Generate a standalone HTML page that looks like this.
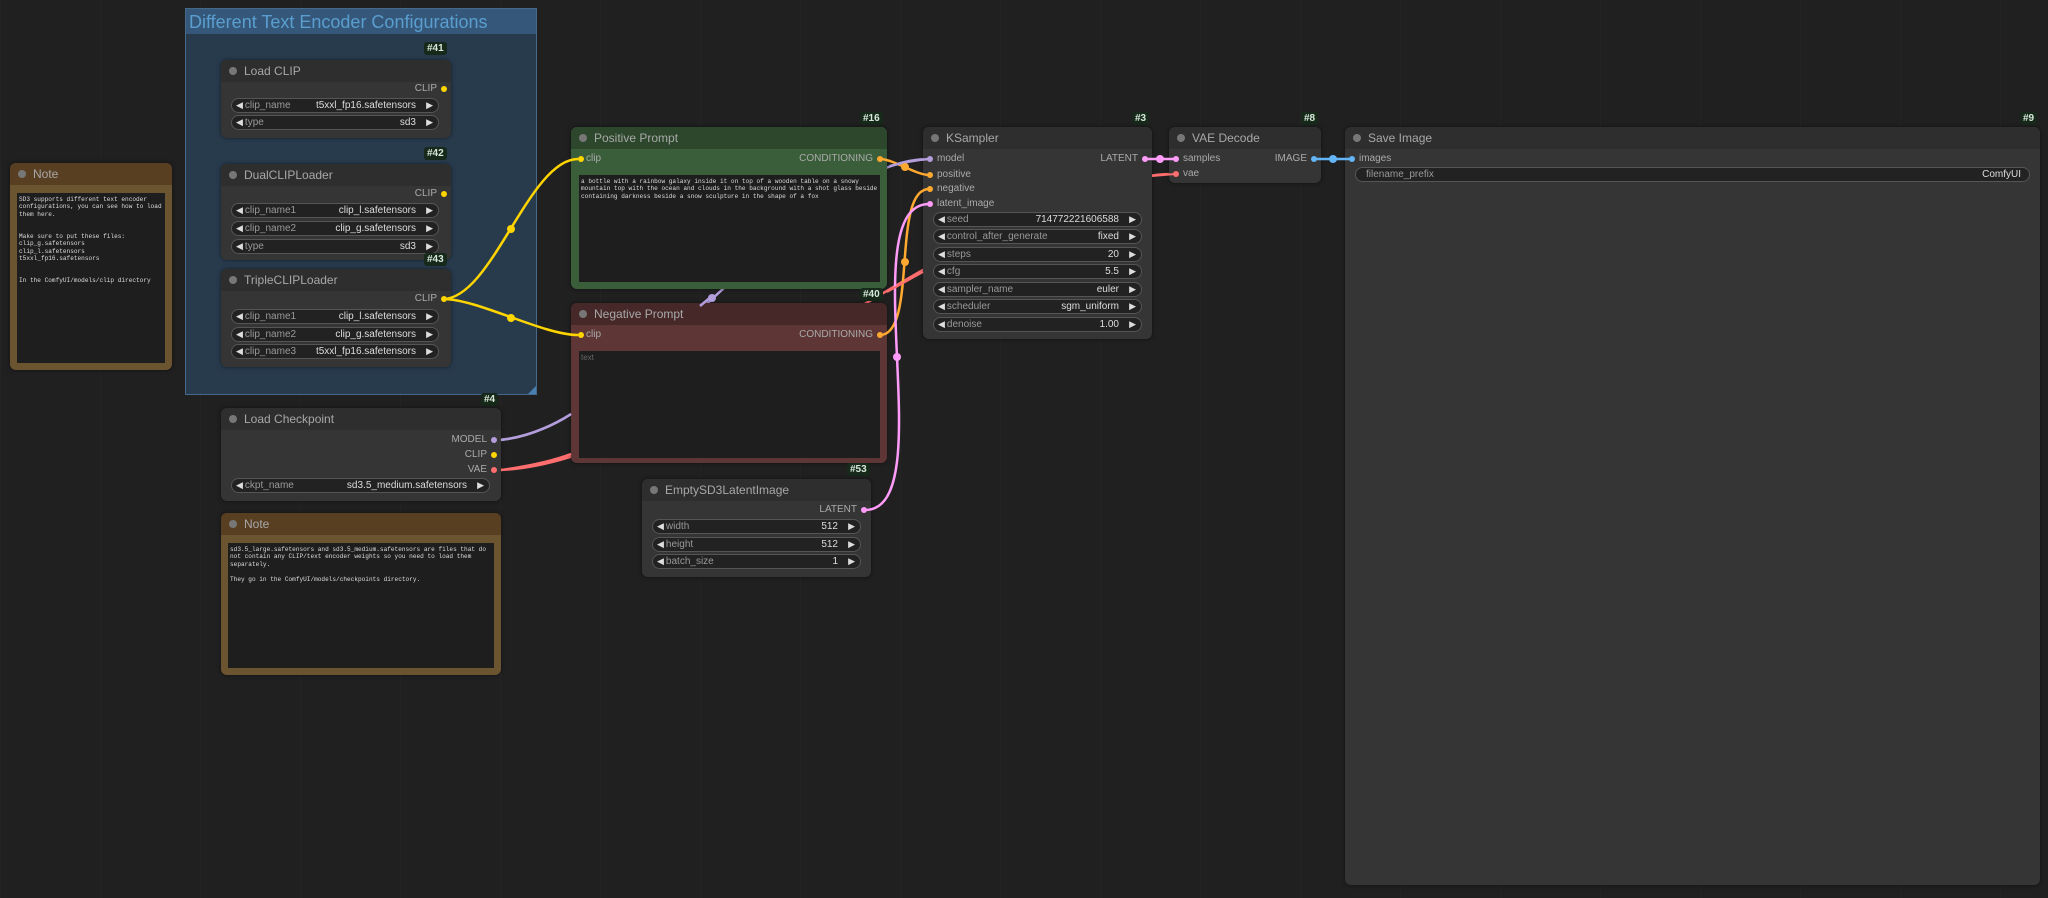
<!DOCTYPE html>
<html><head><meta charset="utf-8"><style>
*{box-sizing:border-box;margin:0;padding:0}
body{width:2048px;height:898px;overflow:hidden;background:#202020;font-family:"Liberation Sans",Arial,sans-serif;position:relative;
background-image:linear-gradient(90deg,rgba(255,255,255,0.018) 1px,transparent 1px);background-size:100px 100px}
.abs{position:absolute}
.group{position:absolute;left:185px;top:8px;width:352px;height:387px;background:#283b4d;border:1px solid #44698a}
.group .gt{height:25px;background:#35587a;color:#5a9ed0;font-size:18px;padding:3px 0 0 3px;white-space:nowrap}
.node{position:absolute;background:#353535;border-radius:6px;box-shadow:0 0 4px rgba(0,0,0,.5)}
.tb{position:absolute;left:0;top:0;right:0;height:22px;background:#2e2e2e;border-radius:6px 6px 0 0;color:#a8a8a8;font-size:12px;line-height:22px;padding-left:23px;white-space:nowrap}
.tb:before{content:"";position:absolute;left:8px;top:7px;width:8px;height:8px;border-radius:50%;background:#777}
.sl{position:absolute;font-size:10px;color:#aaa;line-height:12px;white-space:nowrap}
.out{right:14px;text-align:right}
.in{left:15px}
.dot{position:absolute;width:6px;height:6px;border-radius:50%}
.w{position:absolute;height:15px;border-radius:8px;background:#222;border:1px solid #555;font-size:10px;line-height:13px;color:#999;white-space:nowrap}
.w .l{position:absolute;left:4px;top:0}
.w .l:before{content:"◀";color:#ddd;font-size:9px;margin-right:2px}
.w .v{position:absolute;right:22px;top:0;color:#ddd}
.w .r{position:absolute;right:5px;top:0;color:#ddd;font-size:9px}
.badge{position:absolute;height:13px;background:#17291a;color:#d8e8d8;font-size:10px;font-weight:bold;line-height:13px;padding:0 3px;border-radius:3px}
.ta{position:absolute;background:#1e1e1e;font-family:"Liberation Mono",monospace;font-size:6.1px;line-height:7.4px;color:#ddd;padding:3px 2px;white-space:pre;overflow:hidden}
.Y{background:#ffd500}.O{background:#ffa931}.P{background:#b39ddb}.R{background:#ff6e6e}.K{background:#ff9cf9}.B{background:#64b5f6}
</style></head><body>

<div class="group"><div class="gt">Different Text Encoder Configurations</div>
<div class="abs" style="right:0;bottom:0;width:0;height:0;border-left:8px solid transparent;border-bottom:8px solid #4a80b0"></div></div>

<svg class="abs" style="left:0;top:0" width="2048" height="898">
<g fill="none" stroke-width="2.5">
<path d="M494,440 C624,440 799,159 929,159" stroke="#b39ddb"/>
<path d="M494,470 C680,470 989,174 1175,174" stroke="#ff6e6e"/>
</g>
</svg>

<div class="node" style="left:10px;top:163px;width:162px;height:207px;background:#6b5530">
<div class="tb" style="background:#593f22">Note</div>
<div class="ta" style="left:7px;top:30px;width:148px;height:170px">SD3 supports different text encoder
configurations, you can see how to load
them here.
 
 
Make sure to put these files:
clip_g.safetensors
clip_l.safetensors
t5xxl_fp16.safetensors
 
 
In the ComfyUI/models/clip directory</div></div>

<div class="badge" style="left:424px;top:42px">#41</div>
<div class="node" style="left:221px;top:60px;width:230px;height:78px">
<div class="tb">Load CLIP</div>
<div class="sl out" style="top:23px">CLIP</div><div class="dot Y" style="right:4px;top:26px"></div>
<div class="w" style="left:10px;top:38px;width:208px"><span class="l">clip_name</span><span class="v">t5xxl_fp16.safetensors</span><span class="r">▶</span></div>
<div class="w" style="left:10px;top:55px;width:208px"><span class="l">type</span><span class="v">sd3</span><span class="r">▶</span></div>
</div>

<div class="badge" style="left:424px;top:147px">#42</div>
<div class="node" style="left:221px;top:164px;width:230px;height:96px">
<div class="tb">DualCLIPLoader</div>
<div class="sl out" style="top:24px">CLIP</div><div class="dot Y" style="right:4px;top:27px"></div>
<div class="w" style="left:10px;top:39px;width:208px"><span class="l">clip_name1</span><span class="v">clip_l.safetensors</span><span class="r">▶</span></div>
<div class="w" style="left:10px;top:57px;width:208px"><span class="l">clip_name2</span><span class="v">clip_g.safetensors</span><span class="r">▶</span></div>
<div class="w" style="left:10px;top:75px;width:208px"><span class="l">type</span><span class="v">sd3</span><span class="r">▶</span></div>
</div>

<div class="badge" style="left:424px;top:253px">#43</div>
<div class="node" style="left:221px;top:269px;width:230px;height:98px">
<div class="tb">TripleCLIPLoader</div>
<div class="sl out" style="top:24px">CLIP</div><div class="dot Y" style="right:4px;top:27px"></div>
<div class="w" style="left:10px;top:40px;width:208px"><span class="l">clip_name1</span><span class="v">clip_l.safetensors</span><span class="r">▶</span></div>
<div class="w" style="left:10px;top:58px;width:208px"><span class="l">clip_name2</span><span class="v">clip_g.safetensors</span><span class="r">▶</span></div>
<div class="w" style="left:10px;top:75px;width:208px"><span class="l">clip_name3</span><span class="v">t5xxl_fp16.safetensors</span><span class="r">▶</span></div>
</div>

<div class="badge" style="left:481px;top:393px">#4</div>
<div class="node" style="left:221px;top:408px;width:280px;height:93px">
<div class="tb">Load Checkpoint</div>
<div class="sl out" style="top:26px">MODEL</div><div class="dot P" style="right:4px;top:29px"></div>
<div class="sl out" style="top:41px">CLIP</div><div class="dot Y" style="right:4px;top:44px"></div>
<div class="sl out" style="top:56px">VAE</div><div class="dot R" style="right:4px;top:59px"></div>
<div class="w" style="left:10px;top:70px;width:259px"><span class="l">ckpt_name</span><span class="v">sd3.5_medium.safetensors</span><span class="r">▶</span></div>
</div>

<div class="node" style="left:221px;top:513px;width:280px;height:162px;background:#6b5530">
<div class="tb" style="background:#593f22">Note</div>
<div class="ta" style="left:7px;top:30px;width:266px;height:125px">sd3.5_large.safetensors and sd3.5_medium.safetensors are files that do
not contain any CLIP/text encoder weights so you need to load them
separately.
 
They go in the ComfyUI/models/checkpoints directory.</div></div>

<div class="badge" style="left:860px;top:112px">#16</div>
<div class="node" style="left:571px;top:127px;width:316px;height:162px;background:#3a5e3a">
<div class="tb" style="background:#2c472c">Positive Prompt</div>
<div class="dot Y" style="left:7px;top:29px"></div><div class="sl in" style="top:26px">clip</div>
<div class="sl out" style="top:26px">CONDITIONING</div><div class="dot O" style="right:4px;top:29px"></div>
<div class="ta" style="left:8px;top:48px;width:301px;height:107px">a bottle with a rainbow galaxy inside it on top of a wooden table on a snowy
mountain top with the ocean and clouds in the background with a shot glass beside
containing darkness beside a snow sculpture in the shape of a fox</div>
</div>

<div class="badge" style="left:860px;top:288px">#40</div>
<div class="node" style="left:571px;top:303px;width:316px;height:160px;background:#5e3636">
<div class="tb" style="background:#472828">Negative Prompt</div>
<div class="dot Y" style="left:7px;top:29px"></div><div class="sl in" style="top:26px">clip</div>
<div class="sl out" style="top:26px">CONDITIONING</div><div class="dot O" style="right:4px;top:29px"></div>
<div class="ta" style="left:8px;top:48px;width:301px;height:107px;color:#666;font-family:'Liberation Sans',sans-serif;font-size:8px">text</div>
</div>

<div class="badge" style="left:1132px;top:112px">#3</div>
<div class="node" style="left:923px;top:127px;width:229px;height:212px">
<div class="tb">KSampler</div>
<div class="dot P" style="left:4px;top:29px"></div><div class="sl" style="left:14px;top:26px">model</div>
<div class="dot O" style="left:4px;top:45px"></div><div class="sl" style="left:14px;top:42px">positive</div>
<div class="dot O" style="left:4px;top:59px"></div><div class="sl" style="left:14px;top:56px">negative</div>
<div class="dot K" style="left:4px;top:74px"></div><div class="sl" style="left:14px;top:71px">latent_image</div>
<div class="sl out" style="top:26px">LATENT</div><div class="dot K" style="right:4px;top:29px"></div>
<div class="w" style="left:10px;top:85px;width:209px"><span class="l">seed</span><span class="v">714772221606588</span><span class="r">▶</span></div>
<div class="w" style="left:10px;top:102px;width:209px"><span class="l">control_after_generate</span><span class="v">fixed</span><span class="r">▶</span></div>
<div class="w" style="left:10px;top:120px;width:209px"><span class="l">steps</span><span class="v">20</span><span class="r">▶</span></div>
<div class="w" style="left:10px;top:137px;width:209px"><span class="l">cfg</span><span class="v">5.5</span><span class="r">▶</span></div>
<div class="w" style="left:10px;top:155px;width:209px"><span class="l">sampler_name</span><span class="v">euler</span><span class="r">▶</span></div>
<div class="w" style="left:10px;top:172px;width:209px"><span class="l">scheduler</span><span class="v">sgm_uniform</span><span class="r">▶</span></div>
<div class="w" style="left:10px;top:190px;width:209px"><span class="l">denoise</span><span class="v">1.00</span><span class="r">▶</span></div>
</div>

<div class="badge" style="left:847px;top:463px">#53</div>
<div class="node" style="left:642px;top:479px;width:229px;height:98px">
<div class="tb">EmptySD3LatentImage</div>
<div class="sl out" style="top:25px">LATENT</div><div class="dot K" style="right:4px;top:28px"></div>
<div class="w" style="left:10px;top:40px;width:209px"><span class="l">width</span><span class="v">512</span><span class="r">▶</span></div>
<div class="w" style="left:10px;top:58px;width:209px"><span class="l">height</span><span class="v">512</span><span class="r">▶</span></div>
<div class="w" style="left:10px;top:75px;width:209px"><span class="l">batch_size</span><span class="v">1</span><span class="r">▶</span></div>
</div>

<div class="badge" style="left:1301px;top:112px">#8</div>
<div class="node" style="left:1169px;top:127px;width:152px;height:56px">
<div class="tb">VAE Decode</div>
<div class="dot K" style="left:4px;top:29px"></div><div class="sl" style="left:14px;top:26px">samples</div>
<div class="dot R" style="left:4px;top:44px"></div><div class="sl" style="left:14px;top:41px">vae</div>
<div class="sl out" style="top:26px">IMAGE</div><div class="dot B" style="right:4px;top:29px"></div>
</div>

<div class="badge" style="left:2020px;top:112px">#9</div>
<div class="node" style="left:1345px;top:127px;width:695px;height:758px">
<div class="tb">Save Image</div>
<div class="dot B" style="left:4px;top:29px"></div><div class="sl" style="left:14px;top:26px">images</div>
<div class="w" style="left:10px;top:40px;width:675px"><span class="abs" style="left:10px;top:0">filename_prefix</span><span class="v" style="right:8px">ComfyUI</span></div>
</div>

<svg class="abs" style="left:0;top:0;pointer-events:none" width="2048" height="898">
<g fill="none" stroke-width="2.5">
<path d="M443,299 C492,299 529,159 578,159" stroke="#ffd500"/>
<path d="M443,299 C478,299 543,335 578,335" stroke="#ffd500"/>
<path d="M880,159 C893,159 916,175 929,175" stroke="#ffa931"/>
<path d="M880,335 C918,335 891,189 929,189" stroke="#ffa931"/>
<path d="M865,510 C943,510 851,204 929,204" stroke="#ff9cf9"/>
<path d="M1146,159 L1175,159" stroke="#ff9cf9"/>
<path d="M1315,159 L1351,159" stroke="#64b5f6"/>
<path d="M887,292 L923,272" stroke="#ff6e6e" stroke-width="2"/>
<path d="M1152,176 L1175,174" stroke="#ff6e6e" stroke-width="2"/>
<path d="M501,440 C530,436 555,425 571,414" stroke="#b39ddb"/>
<path d="M501,470 C530,466 555,460 571,454" stroke="#ff6e6e"/>
<path d="M700,306 L712,296" stroke="#b39ddb"/>
<path d="M890,166 C905,162 915,160 929,159" stroke="#b39ddb"/>
</g>
<g>
<circle cx="511" cy="229" r="4" fill="#ffd500"/>
<circle cx="511" cy="318" r="4" fill="#ffd500"/>
<circle cx="905" cy="167" r="4" fill="#ffa931"/>
<circle cx="905" cy="262" r="4" fill="#ffa931"/>
<circle cx="897" cy="357" r="4" fill="#ff9cf9"/>
<circle cx="1160" cy="159" r="4" fill="#ff9cf9"/>
<circle cx="1333" cy="159" r="4" fill="#64b5f6"/>
<circle cx="712" cy="298" r="4" fill="#b39ddb"/>
</g>
</svg>
</body></html>
